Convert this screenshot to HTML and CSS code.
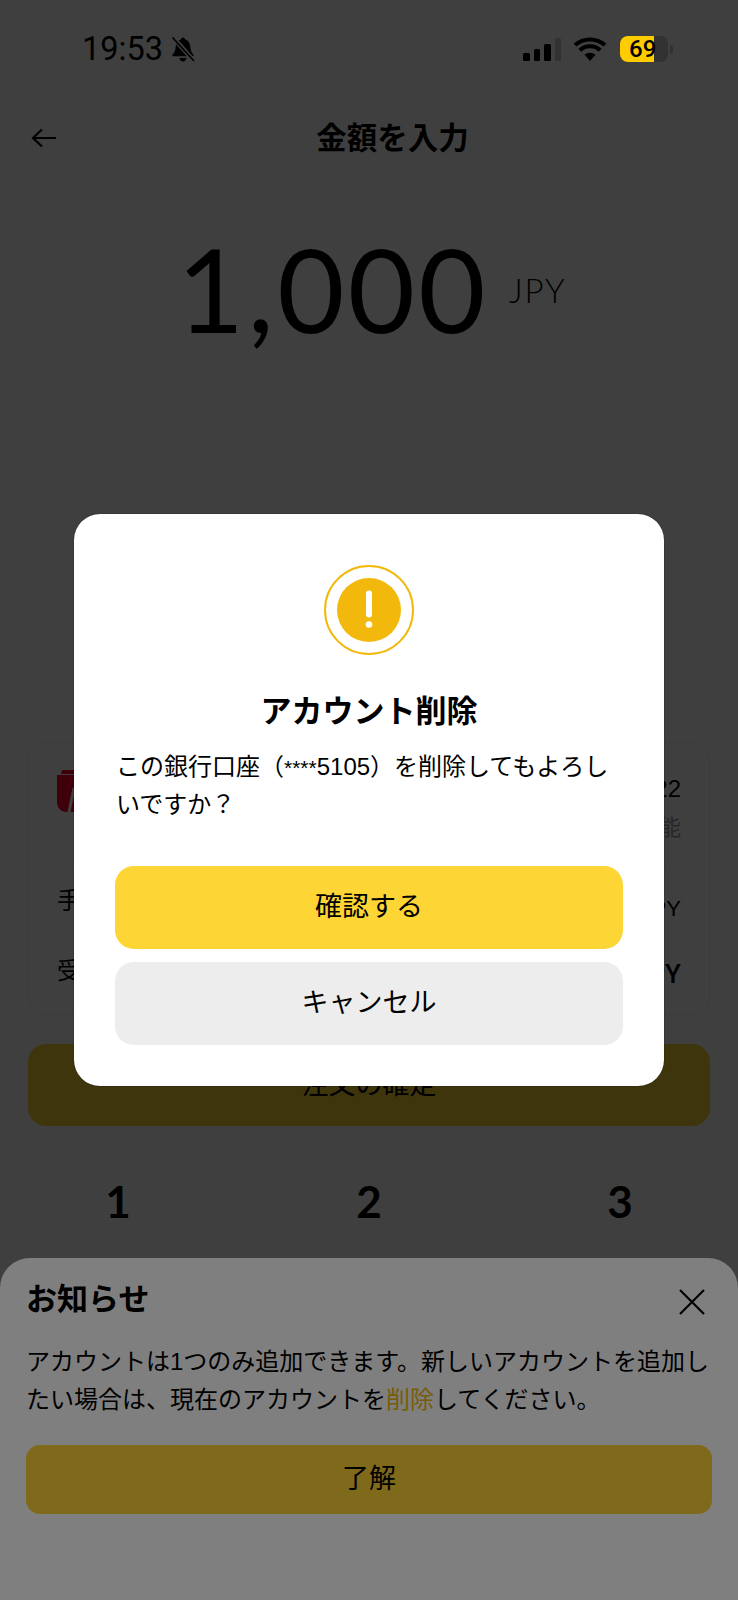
FILE: index.html
```html
<!DOCTYPE html>
<html lang="ja">
  <head>
    <meta charset="UTF-8" />
    <title>金額を入力</title>
    <link rel="stylesheet" href="styles.css">
  </head>
  <body>
    <div class="screen">
      <div class="page">
        <div class="top_bar">
          <svg class="back_icon" width="26" height="20" viewBox="0 0 26 20"><path d="M25 10H2M11 1.5 2 10l9 8.5" fill="none" stroke="#000" stroke-width="2.2"/></svg>
          <h1 class="top_title">金額を入力</h1>
        </div>
        <div class="amount">
          <span class="amount_num">1,000</span>
          <span class="amount_unit">JPY</span>
        </div>
        <div class="card">
          <div class="card_head">
            <svg class="bank_logo" width="40" height="42" viewBox="0 0 40 42">
              <path d="M5 0h30v4H4zM0 5h40v37H10C4 42 0 38 0 32z" fill="#ff0033"/>
              <path d="M17 18 12 42" stroke="#fff" stroke-width="3"/>
            </svg>
            <div class="bank_info">
              <div class="bank_no">22</div>
              <div class="bank_state">利用可能</div>
            </div>
          </div>
          <div class="card_row"><span>手数料</span><span class="row_val">JPY</span></div>
          <div class="card_row"><span>受取額</span><span class="row_val row_total">JPY</span></div>
        </div>
        <div class="submit_btn">注文の確定</div>
        <div class="keypad">
          <span>1</span>
          <span>2</span>
          <span>3</span>
        </div>
      </div>

      <div class="scrim"></div>

      <div class="sheet">
        <div class="sheet_head">
          <h2 class="sheet_title">お知らせ</h2>
          <svg class="close_icon" width="26" height="26" viewBox="0 0 26 26"><path d="M1 1l24 24M25 1 1 25" fill="none" stroke="#000" stroke-width="2.2"/></svg>
        </div>
        <p class="sheet_text">アカウントは1つのみ追加できます。新しいアカウントを追加したい場合は、現在のアカウントを<span class="link">削除</span>してください。</p>
        <div class="sheet_btn">了解</div>
      </div>

      <div class="scrim scrim_top">
        <div class="dialog">
          <div class="alert_icon">
            <svg width="64" height="64" viewBox="0 0 64 64">
              <circle cx="32" cy="32" r="32" fill="#f2b90c"/>
              <rect x="29" y="12.500" width="6" height="27" rx="3" fill="#fff"/>
              <circle cx="32" cy="46.500" r="3.300" fill="#fff"/>
            </svg>
          </div>
          <h2 class="dialog_title">アカウント削除</h2>
          <p class="dialog_text">この銀行口座（<span class="stars">****</span>5105）を削除してもよろしいですか？</p>
          <div class="dialog_btn btn_yes">確認する</div>
          <div class="dialog_btn btn_no">キャンセル</div>
        </div>
      </div>

      <div class="status">
        <span class="status_time">19:53</span>
        <svg class="bell_icon" width="24" height="26" viewBox="0 0 24 26">
          <path d="M12 1.500c1 0 1.800.8 1.800 1.700 3.400 1 5.200 3.700 5.500 7.200.3 4.300 1.200 6.200 3 8 .6.7.2 1.800-.8 1.800H2.500c-1 0-1.400-1.100-.8-1.800 1.800-1.800 2.700-3.700 3-8 .3-3.500 2.100-6.200 5.500-7.200 0-.9.8-1.700 1.800-1.700zM8.400 22h7.200c-.3 2-1.800 3.400-3.600 3.400S8.700 24 8.400 22z" fill="#000"/>
          <path d="M3 2.500 22 24" stroke="#404040" stroke-width="4.500"/>
          <path d="M1.500 1.500 23 25" stroke="#000" stroke-width="1.700"/>
        </svg>
        <span class="status_fill"></span>
        <span class="signal">
          <i class="bar1"></i><i class="bar2"></i><i class="bar3"></i><i class="bar4"></i>
        </span>
        <svg class="wifi_icon" width="34" height="24" viewBox="0 0 34 24">
          <path d="M17 24 11.500 17.800C14.700 15 19.300 15 22.500 17.800z" fill="#000"/>
          <path d="M6.800 13.300C12.600 8 21.400 8 27.200 13.300" fill="none" stroke="#000" stroke-width="4"/>
          <path d="M2 8C10.500 .5 23.500 .5 32 8" fill="none" stroke="#000" stroke-width="4"/>
        </svg>
        <span class="battery"><span class="battery_fill"></span><span class="battery_num">69</span></span>
        <span class="battery_nub"></span>
      </div>
    </div>
  </body>
</html>
```

FILE: styles.css
```css
* {
  margin: 0;
  padding: 0;
  box-sizing: border-box;
}
body {
  font-family: "Liberation Sans", "Noto Sans CJK JP", sans-serif;
  color: #000;
  background: #fff;
}
.screen {
  position: relative;
  width: 738px;
  height: 1600px;
  overflow: hidden;
}
.page {
  background: #fff;
  height: 1600px;
  padding-top: 108px;
}
.top_bar {
  display: flex;
  align-items: center;
  height: 60px;
  padding: 0 10px 0 31px;
}
.back_icon {
  flex: none;
}
.top_title {
  flex: 1;
  text-align: center;
  font-size: 30.500px;
  font-weight: 700;
  line-height: 60px;
}
.amount {
  display: flex;
  margin-top: 61px;
  padding-left: 177px;
  height: 120px;
  font-family: Lato, sans-serif;
}
.amount_num {
  font-size: 116px;
  line-height: 120px;
  letter-spacing: 3.300px;
}
.amount_unit {
  font-size: 33px;
  font-weight: 300;
  line-height: 40px;
  letter-spacing: 1.800px;
  margin: 41px 0 0 20px;
}
.card {
  margin: 393px 28px 0;
  height: 273px;
  border: 1px solid #eee;
  border-radius: 16px;
  padding: 27px 28px 0;
}
.card_head {
  display: flex;
  justify-content: space-between;
  height: 96px;
  border-bottom: 1px solid #f4f4f4;
}
.bank_info {
  text-align: right;
}
.bank_no {
  font-size: 24px;
  line-height: 38px;
}
.bank_state {
  margin-top: 2px;
  font-size: 22px;
  line-height: 36px;
  color: #999;
}
.card_row {
  display: flex;
  justify-content: space-between;
  margin-top: 17px;
  font-size: 24px;
  line-height: 36px;
}
.card_row + .card_row {
  margin-top: 26px;
}
.row_val {
  margin-top: 8px;
  font-size: 22px;
}
.row_total {
  margin-top: 3px;
  font-family: Roboto, sans-serif;
  font-size: 26px;
  font-weight: 500;
}
.submit_btn {
  margin: 29px 28px 0;
  height: 82px;
  border-radius: 18px;
  background: #fdd535;
  font-size: 27px;
  line-height: 82px;
  text-align: center;
}
.keypad {
  display: grid;
  grid-template-columns: repeat(3, 251px);
  justify-content: center;
  margin-top: 47px;
  font-family: Lato, sans-serif;
  font-size: 44px;
  font-weight: 700;
  line-height: 56px;
  text-align: center;
}
.scrim {
  position: absolute;
  top: 0;
  right: 0;
  bottom: 0;
  left: 0;
  background: rgba(0, 0, 0, 0.5);
}
.scrim_top {
  display: flex;
  align-items: center;
  justify-content: center;
}
.sheet {
  position: absolute;
  top: 1258px;
  right: 0;
  bottom: 0;
  left: 0;
  background: #fff;
  border-radius: 30px 30px 0 0;
  padding: 22px 26px 0;
}
.sheet_head {
  display: flex;
  justify-content: space-between;
  align-items: center;
  height: 40px;
}
.sheet_title {
  font-size: 31px;
  font-weight: 700;
  line-height: 40px;
}
.close_icon {
  margin: 4px 7px 0 0;
}
.sheet_text {
  margin-top: 23px;
  font-size: 24px;
  line-height: 37.500px;
}
.link {
  color: #f0b90b;
}
.sheet_btn {
  margin-top: 27px;
  height: 69px;
  border-radius: 14px;
  background: #fdd535;
  font-size: 27px;
  line-height: 69px;
  text-align: center;
}
.dialog {
  width: 590px;
  height: 572px;
  background: #fff;
  border-radius: 26px;
  padding: 51px 41px 0;
  box-shadow: 0 0 1px #000;
}
.alert_icon {
  display: flex;
  align-items: center;
  justify-content: center;
  width: 90px;
  height: 90px;
  margin: 0 auto;
  border: 2px solid #f2b90c;
  border-radius: 50%;
}
.alert_icon svg {
  display: block;
}
.dialog_title {
  margin-top: 36px;
  font-size: 31px;
  font-weight: 700;
  line-height: 42px;
  text-align: center;
}
.dialog_text {
  margin-top: 15px;
  padding-left: 1px;
  font-size: 24px;
  line-height: 37.500px;
}
.stars {
  font-size: 21px;
  line-height: 1;
}
.dialog_btn {
  height: 83px;
  border-radius: 19px;
  font-size: 27px;
  line-height: 83px;
  text-align: center;
}
.btn_yes {
  margin-top: 43px;
  background: #fdd535;
}
.btn_no {
  margin-top: 13px;
  background: #ededed;
}
.status {
  position: absolute;
  top: 36px;
  left: 82px;
  right: 65px;
  display: flex;
  align-items: center;
  height: 26px;
}
.status_time {
  font-family: Roboto, sans-serif;
  font-size: 32.500px;
  line-height: 30px;
}
.bell_icon {
  margin-left: 8px;
}
.status_fill {
  flex: 1;
}
.signal {
  display: flex;
  align-items: flex-end;
  gap: 4px;
  height: 23px;
}
.signal i {
  display: block;
  width: 6.500px;
  border-radius: 1.500px;
  background: #000;
}
.bar1 {
  height: 8px;
}
.bar2 {
  height: 12px;
}
.bar3 {
  height: 17px;
}
.signal .bar4 {
  height: 23px;
  background: rgba(0, 0, 0, 0.2);
}
.wifi_icon {
  margin-left: 12px;
}
.battery {
  position: relative;
  display: block;
  width: 48px;
  height: 26px;
  margin-left: 13px;
  border-radius: 8px;
  background: rgba(0, 0, 0, 0.2);
}
.battery_fill {
  display: block;
  width: 34px;
  height: 26px;
  border-radius: 8px 0 0 8px;
  background: #ffcc00;
}
.battery_num {
  position: absolute;
  top: 0;
  left: 9px;
  font-family: Roboto, sans-serif;
  font-size: 24px;
  font-weight: 500;
  line-height: 26px;
}
.battery_nub {
  width: 3px;
  height: 9px;
  margin-left: 2px;
  border-radius: 0 3px 3px 0;
  background: rgba(0, 0, 0, 0.2);
}
```
